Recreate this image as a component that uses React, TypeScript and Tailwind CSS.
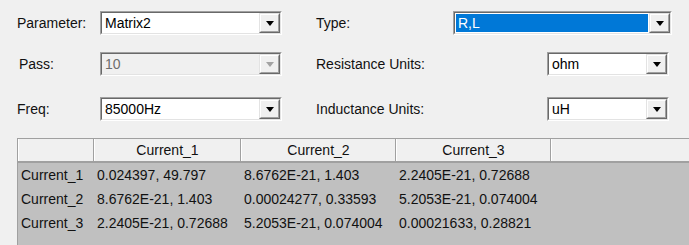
import type { ReactNode } from 'react';

type ComboProps = {
  value: string;
  widthClass: string;
  selected?: boolean;
  disabled?: boolean;
};

function Arrow({ disabled }: { disabled?: boolean }) {
  return (
    <svg width="8" height="5" viewBox="0 0 8 5">
      <polygon points="0,0 8,0 4,5" fill={disabled ? '#a3a3a3' : '#000'} />
    </svg>
  );
}

// Windows classic combo box: sunken frame, text field, raised drop button
function Combo({ value, widthClass, selected, disabled }: ComboProps) {
  return (
    <div className={`flex h-[24px] ${widthClass} border border-t-[#a0a0a0] border-l-[#a0a0a0] border-b-white border-r-white`}>
      <div
        className={`flex flex-1 border border-t-[#696969] border-l-[#696969] border-b-[#e3e3e3] border-r-[#e3e3e3] ${
          disabled ? 'bg-[#f0f0f0]' : 'bg-white'
        }`}
      >
        <div className="flex flex-1 p-px">
          <div
            className={`flex flex-1 items-center pl-[2px] ${
              selected ? 'bg-[#0078d7] text-white' : disabled ? 'text-[#6d6d6d]' : 'text-black'
            }`}
          >
            {value}
          </div>
        </div>
        <div className="flex w-[21px] border border-t-[#e3e3e3] border-l-[#e3e3e3] border-b-[#696969] border-r-[#696969]">
          <div className="flex flex-1 items-center justify-center border border-t-white border-l-white border-b-[#a0a0a0] border-r-[#a0a0a0] bg-[#f0f0f0]">
            <Arrow disabled={disabled} />
          </div>
        </div>
      </div>
    </div>
  );
}

function Row({ children, className }: { children: ReactNode; className: string }) {
  return <div className={`flex items-center ${className}`}>{children}</div>;
}

const HEADERS = [
  { label: '', w: 'w-[76px]' },
  { label: 'Current_1', w: 'w-[147px]' },
  { label: 'Current_2', w: 'w-[155px]' },
  { label: 'Current_3', w: 'w-[155px]' },
];

const ROWS = [
  ['Current_1', '0.024397, 49.797', '8.6762E-21, 1.403', '2.2405E-21, 0.72688'],
  ['Current_2', '8.6762E-21, 1.403', '0.00024277, 0.33593', '5.2053E-21, 0.074004'],
  ['Current_3', '2.2405E-21, 0.72688', '5.2053E-21, 0.074004', '0.00021633, 0.28821'],
];

export default function App() {
  return (
    <div
      className="flex h-[245px] w-[689px] flex-col overflow-hidden bg-[#f0f0f0] text-[14px] text-[#111]"
      style={{ fontFamily: '"Liberation Sans", Arial, sans-serif' }}
    >
      {/* Parameter / Type */}
      <Row className="mt-[11px] pl-[17px]">
        <span className="w-[83px]">Parameter:</span>
        <Combo value="Matrix2" widthClass="w-[182px]" />
        <span className="ml-[34px] w-[137px]">Type:</span>
        <Combo value="R,L" widthClass="w-[219px]" selected />
      </Row>

      {/* Pass / Resistance */}
      <Row className="mt-[17px] pl-[17px]">
        <span className="w-[83px] pl-[2px]">Pass:</span>
        <Combo value="10" widthClass="w-[182px]" disabled />
        <span className="ml-[34px] w-[231px]">Resistance Units:</span>
        <Combo value="ohm" widthClass="w-[122px]" />
      </Row>

      {/* Freq / Inductance */}
      <Row className="mt-[21px] pl-[17px]">
        <span className="w-[83px]">Freq:</span>
        <Combo value="85000Hz" widthClass="w-[182px]" />
        <span className="ml-[34px] w-[231px]">Inductance Units:</span>
        <Combo value="uH" widthClass="w-[122px]" />
      </Row>

      {/* Result grid */}
      <div className="ml-[17px] mt-[17px] flex flex-1 flex-col border-l border-t border-[#a0a0a0] bg-[#c0c0c0]">
        <div className="flex h-[24px] border-b-2 border-[#a0a0a0] bg-[#f0f0f0]">
          {HEADERS.map((h, i) => (
            <div
              key={i}
              className={`flex ${h.w} shrink-0 items-center justify-center border-l border-r border-l-white border-r-[#a0a0a0]`}
            >
              {h.label}
            </div>
          ))}
          <div className="flex-1 border-l border-l-white" />
        </div>
        {ROWS.map((r) => (
          <div key={r[0]} className="flex h-[24px]">
            {r.map((cell, i) => (
              <div key={i} className={`flex ${HEADERS[i].w} shrink-0 items-center whitespace-nowrap pl-[3px]`}>
                {cell}
              </div>
            ))}
          </div>
        ))}
      </div>
    </div>
  );
}
